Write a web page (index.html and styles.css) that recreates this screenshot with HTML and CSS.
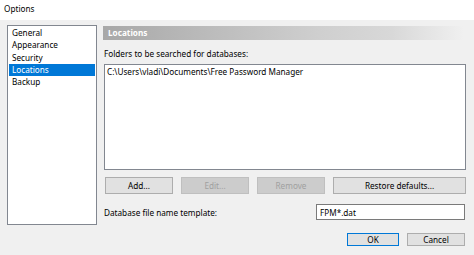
FILE: index.html
```html
<!DOCTYPE html>
<html lang="en">
<head>
    <meta charset="UTF-8">
    <title>Options</title>
    <link rel="stylesheet" href="styles.css">
</head>
<body>
<div class="window">
    <div class="titlebar">Options</div>
    <div class="dialog">
        <div class="content">
            <!-- Список разделов -->
            <ul class="nav">
                <li>General</li>
                <li>Appearance</li>
                <li>Security</li>
                <li class="selected">Locations</li>
                <li>Backup</li>
            </ul>
            <!-- Страница раздела -->
            <div class="page">
                <div class="page-header">Locations</div>
                <div class="label">Folders to be searched for databases:</div>
                <ul class="folders">
                    <li>C:\Users\vladi\Documents\Free Password Manager</li>
                </ul>
                <div class="buttons">
                    <button class="btn">Add...</button>
                    <button class="btn" disabled>Edit...</button>
                    <button class="btn" disabled>Remove</button>
                    <button class="btn wide">Restore defaults...</button>
                </div>
                <div class="template">
                    <span>Database file name template:</span>
                    <input type="text" value="FPM*.dat">
                </div>
            </div>
        </div>
        <div class="footer">
            <button class="btn default">OK</button>
            <button class="btn cancel">Cancel</button>
        </div>
    </div>
</div>
</body>
</html>
```

FILE: styles.css
```css
/* Общие стили */
body {
    margin: 0;
    padding: 0;
    font-family: 'Noto Sans', 'Open Sans', sans-serif;
    font-size: 8.2px;
    color: #000;
    background: #f0f0f0;
}

ul {
    list-style: none;
    margin: 0;
    padding: 0;
}

.window {
    width: 474px;
    height: 255px;
    overflow: hidden;
}

.titlebar {
    height: 20px;
    line-height: 18px;
    padding-left: 4px;
    background: #fff;
}

.dialog {
    padding: 5px 8px 0 7px;
}

.content {
    display: flex;
    gap: 6px;
}

/* Левый список */
.nav {
    width: 90px;
    height: 197px;
    border: 1px solid #828790;
    background: #fff;
    padding-top: 1px;
    box-sizing: content-box;
}

.nav li {
    height: 12.25px;
    line-height: 12.25px;
    padding-left: 3px;
    margin: 0 1px;
}

.nav li.selected {
    background: #0078d7;
    color: #fff;
}

/* Страница */
.page {
    flex: 1;
    display: flex;
    flex-direction: column;
}

.page-header {
    height: 14px;
    line-height: 14px;
    margin-top: 1px;
    margin-right: 2px;
    padding-left: 5px;
    font-weight: bold;
    color: #fff;
    background: linear-gradient(to right, #a8a8a8, #cfcfcf 60%, #d8d8d8 80%, #f0f0f0);
}

.label {
    margin-top: 6px;
    padding-left: 1px;
    height: 16px;
    line-height: 16px;
}

.folders {
    height: 102px;
    margin-top: 2px;
    margin-left: 1px;
    border: 1px solid #828790;
    background: #fff;
    padding: 1px 2px;
}

.folders li {
    line-height: 12px;
}

.buttons {
    display: flex;
    gap: 8px;
    margin-top: 7px;
    padding-left: 2px;
}

.btn {
    font-family: inherit;
    font-size: 8.2px;
    height: 17px;
    width: 68px;
    padding: 0;
    border: 1px solid #adadad;
    background: #e1e1e1;
    color: #000;
}

.btn:disabled {
    color: #a0a0a0;
    background: #cccccc;
    border-color: #bfbfbf;
}

.btn.wide {
    width: 133px;
}

.template {
    display: flex;
    justify-content: space-between;
    align-items: center;
    margin-top: 10px;
    padding-left: 1px;
}

.template input {
    width: 141px;
    height: 14px;
    padding: 0 3px;
    border: 1px solid #7a7a7a;
    font-family: inherit;
    font-size: 8.2px;
    margin-right: 1px;
}

/* Нижние кнопки */
.footer {
    display: flex;
    justify-content: flex-end;
    gap: 8px;
    margin-top: 8px;
    margin-right: 1px;
}

.footer .btn {
    height: 13px;
    line-height: 11px;
    width: 52px;
}

.footer .btn.default {
    border-color: #0078d7;
}

.footer .btn.cancel {
    width: 58px;
}
```
